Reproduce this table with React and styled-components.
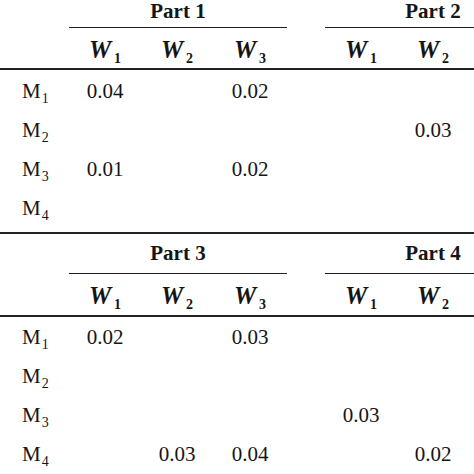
import React from "react";
import styled, { createGlobalStyle } from "styled-components";

const GlobalStyle = createGlobalStyle`
  html, body {
    margin: 0;
    padding: 0;
    background: #fff;
  }
`;

const SERIF = `"Liberation Serif", "Times New Roman", serif`;
const COLS = "69px 72px 72px 74px 38px 72px 72px 72px";

const Page = styled.div`
  width: 474px;
  height: 474px;
  overflow: hidden;
  font-family: ${SERIF};
  color: #151515;
`;

const Sheet = styled.div`
  width: 541px;
`;

const Block = styled.div`
  border-bottom: ${(p) => (p.$ruled ? "2px solid #222" : "none")};
`;

const Row = styled.div`
  display: grid;
  grid-template-columns: ${COLS};
  height: ${(p) => p.$h}px;
  box-sizing: border-box;
  border-bottom: ${(p) => (p.$ruled ? "2px solid #222" : "none")};
`;

const Body = styled.div`
  padding: ${(p) => p.$pad};
`;

const PartCell = styled.div`
  grid-column: span 3;
  display: flex;
  align-items: flex-end;
  justify-content: center;
  padding-bottom: ${(p) => p.$pb}px;
  border-bottom: 1.5px solid #222;
  font-family: ${SERIF};
  font-weight: bold;
  font-size: 21px;
  line-height: 19px;
`;

const Cell = styled.div`
  display: flex;
  align-items: center;
  justify-content: center;
  font-family: ${SERIF};
  font-size: 21px;
  line-height: 1;
`;

const Label = styled(Cell)`
  justify-content: flex-start;
  padding-left: 22px;
`;

const WHead = styled(Cell)`
  font-weight: bold;
  font-style: italic;
  font-size: 25px;
  padding-top: 2px;
`;

const Sub = styled.span`
  display: inline-block;
  font-size: 14px;
  font-style: normal;
  position: relative;
  top: 5px;
  margin-left: ${(p) => p.$ml ?? 1}px;
`;

const blocks = [
  {
    parts: ["Part 1", "Part 2"],
    heads: [3, 2],
    pad: "2px 0 4px",
    partH: 28,
    partPb: 6,
    wH: 42,
    rows: [
      [["0.04", "", "0.02"], ["", "", ""]],
      [["", "", ""], ["", "0.03", ""]],
      [["0.01", "", "0.02"], ["", "", ""]],
      [["", "", ""], ["", "", ""]],
    ],
  },
  {
    parts: ["Part 3", "Part 4"],
    heads: [3, 2],
    pad: "1px 0 0",
    partH: 40,
    partPb: 10,
    wH: 43,
    rows: [
      [["0.02", "", "0.03"], ["", "", ""]],
      [["", "", ""], ["", "", ""]],
      [["", "", ""], ["0.03", "", ""]],
      [["", "0.03", "0.04"], ["", "0.02", ""]],
    ],
  },
];

const Heads = ({ n }) =>
  [1, 2, 3].map((i) => (
    <WHead key={i}>
      {i <= n && (
        <span>
          W<Sub $ml={3}>{i}</Sub>
        </span>
      )}
    </WHead>
  ));

const App = () => {
  return (
    <Page>
      <GlobalStyle />
      <Sheet>
        {blocks.map((b, bi) => (
          <Block key={bi} $ruled={bi === 0}>
            <Row $h={b.partH}>
              <div />
              <PartCell $pb={b.partPb}>{b.parts[0]}</PartCell>
              <div />
              <PartCell $pb={b.partPb}>{b.parts[1]}</PartCell>
            </Row>
            <Row $h={b.wH} $ruled>
              <div />
              <Heads n={b.heads[0]} />
              <div />
              <Heads n={b.heads[1]} />
            </Row>
            <Body $pad={b.pad}>
              {b.rows.map((r, ri) => (
                <Row key={ri} $h={39}>
                  <Label>
                    <span>
                      M<Sub>{ri + 1}</Sub>
                    </span>
                  </Label>
                  {r[0].map((v, i) => (
                    <Cell key={"a" + i}>{v}</Cell>
                  ))}
                  <div />
                  {r[1].map((v, i) => (
                    <Cell key={"b" + i}>{v}</Cell>
                  ))}
                </Row>
              ))}
            </Body>
          </Block>
        ))}
      </Sheet>
    </Page>
  );
};

export default App;
